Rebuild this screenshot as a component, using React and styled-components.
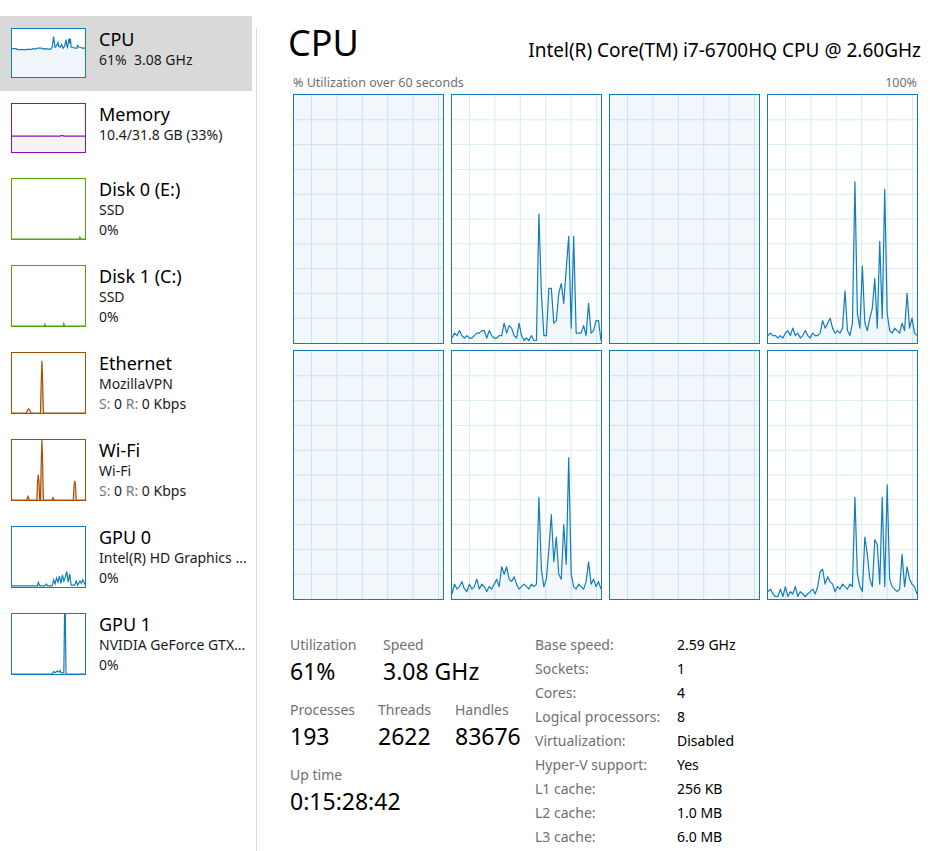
import React from "react";
import styled, { createGlobalStyle } from "styled-components";

const GlobalStyle = createGlobalStyle`
  html, body {
    margin: 0;
    padding: 0;
    background: #ffffff;
  }
  body {
    font-family: "Noto Sans", "Open Sans", sans-serif;
    color: #000000;
  }
`;

const CPU_BLUE = "#117dbb";

// 61 samples, one every 2.5px across a 150px wide cell
const coreData = [
  null,
  [2, 4, 3, 5, 3, 2, 3, 2, 2, 3, 4, 4, 5, 5, 2, 5, 3, 2, 2, 3, 3, 8, 4, 7, 6, 3, 2, 8, 3, 1, 2, 1, 3, 1, 1, 52, 20, 3, 3, 22, 22, 8, 9, 20, 24, 16, 30, 43, 6, 43, 4, 4, 4, 7, 3, 16, 4, 5, 9, 9, 1],
  null,
  [3, 4, 3, 3, 2, 3, 2, 4, 5, 3, 6, 3, 4, 2, 3, 5, 3, 2, 4, 3, 3, 4, 9, 6, 8, 10, 6, 4, 5, 4, 6, 21, 5, 3, 8, 65, 12, 6, 31, 8, 5, 10, 14, 26, 6, 41, 10, 62, 12, 5, 4, 6, 5, 4, 8, 5, 20, 6, 10, 4, 3],
  null,
  [2, 6, 4, 5, 7, 4, 3, 6, 4, 5, 8, 4, 6, 5, 3, 5, 4, 6, 8, 5, 13, 10, 13, 8, 7, 9, 6, 4, 5, 6, 5, 4, 6, 5, 6, 41, 12, 5, 8, 20, 34, 15, 25, 10, 8, 30, 14, 57, 10, 5, 4, 6, 5, 4, 7, 15, 6, 8, 5, 7, 4],
  null,
  [3, 4, 2, 1, 1, 4, 1, 5, 1, 3, 2, 5, 1, 3, 2, 1, 2, 3, 4, 2, 5, 11, 12, 6, 9, 7, 6, 3, 5, 4, 6, 5, 4, 6, 5, 41, 10, 5, 3, 25, 18, 8, 5, 24, 22, 6, 41, 5, 46, 8, 5, 4, 3, 4, 18, 5, 13, 8, 6, 5, 2],
];

const devices = [
  {
    name: "CPU",
    lines: [["61%  3.08 GHz"]],
    color: CPU_BLUE,
    fill: "#f1f6fa",
    height: 50,
    selected: true,
    points: [[0, 59], [6, 59], [7, 57], [20, 57], [22, 58], [26, 57], [28, 59], [32, 58], [35, 60], [40, 60], [43, 58], [46, 59], [50, 58], [53, 58], [55, 62], [57, 84], [59, 62], [61, 65], [63, 72], [64, 64], [66, 62], [68, 68], [70, 60], [72, 64], [74, 78], [75, 66], [76, 62], [78, 80], [79, 70], [80, 80], [81, 62], [84, 62], [86, 60], [89, 60], [90, 66], [92, 62], [94, 62], [96, 60], [100, 60]],
  },
  {
    name: "Memory",
    lines: [["10.4/31.8 GB (33%)"]],
    color: "#8b12ae",
    fill: "#f4f2f4",
    height: 50,
    points: [[0, 33], [66, 33], [67, 34], [70, 34], [71, 33], [100, 33]],
  },
  {
    name: "Disk 0 (E:)",
    lines: [["SSD"], ["0%"]],
    color: "#4da60c",
    fill: "none",
    height: 62,
    points: [[0, 0], [92, 0], [93, 3], [94, 0], [100, 0]],
  },
  {
    name: "Disk 1 (C:)",
    lines: [["SSD"], ["0%"]],
    color: "#4da60c",
    fill: "none",
    height: 62,
    points: [[0, 0], [44, 0], [45, 3], [46, 0], [70, 0], [71, 4], [72, 0], [100, 0]],
  },
  {
    name: "Ethernet",
    lines: [["MozillaVPN"], ["S: ", "0", " R: ", "0 Kbps"]],
    color: "#a74f01",
    fill: "rgba(167, 79, 1, 0.22)",
    height: 62,
    points: [[0, 0], [20, 0], [21, 5], [23, 7], [25, 3], [26, 0], [39, 0], [40, 50], [41, 87], [42, 50], [43, 0], [100, 0]],
  },
  {
    name: "Wi-Fi",
    lines: [["Wi-Fi"], ["S: ", "0", " R: ", "0 Kbps"]],
    color: "#a74f01",
    fill: "rgba(167, 79, 1, 0.22)",
    height: 62,
    points: [[0, 0], [20, 0], [22, 6], [24, 0], [34, 0], [35, 30], [36, 42], [37, 30], [38, 0], [39, 0], [40, 60], [41, 100], [42, 60], [43, 0], [55, 0], [56, 4], [58, 0], [84, 0], [85, 25], [86, 32], [87, 25], [88, 0], [100, 0]],
  },
  {
    name: "GPU 0",
    lines: [["Intel(R) HD Graphics ..."], ["0%"]],
    color: CPU_BLUE,
    fill: "none",
    height: 62,
    points: [[0, 2], [33, 2], [35, 2], [36, 8], [38, 2], [45, 2], [47, 5], [49, 2], [55, 2], [57, 12], [59, 5], [61, 15], [63, 8], [65, 18], [67, 6], [69, 20], [71, 10], [73, 16], [75, 26], [77, 8], [79, 22], [81, 3], [86, 3], [88, 10], [90, 3], [93, 10], [95, 6], [97, 12], [100, 4]],
  },
  {
    name: "GPU 1",
    lines: [["NVIDIA GeForce GTX..."], ["0%"]],
    color: CPU_BLUE,
    fill: "none",
    height: 62,
    points: [[0, 0], [55, 0], [57, 4], [59, 2], [62, 5], [64, 3], [66, 6], [67, 2], [71, 2], [72, 100], [73, 100], [74, 0], [100, 0]],
  },
];

const specs = [
  ["Base speed:", "2.59 GHz"],
  ["Sockets:", "1"],
  ["Cores:", "4"],
  ["Logical processors:", "8"],
  ["Virtualization:", "Disabled"],
  ["Hyper-V support:", "Yes"],
  ["L1 cache:", "256 KB"],
  ["L2 cache:", "1.0 MB"],
  ["L3 cache:", "6.0 MB"],
];

const Page = styled.div`
  display: flex;
  width: 930px;
  min-height: 851px;
`;

const Sidebar = styled.nav`
  width: 252px;
  padding-top: 16px;
  flex-shrink: 0;
`;

const Divider = styled.div`
  width: 1px;
  margin: 28px 0 0 4px;
  background: #d9d9d9;
  flex-shrink: 0;
`;

const Item = styled.div`
  display: flex;
  gap: 13px;
  padding: 12px 0 13px 11px;
  background: ${(p) => (p.$selected ? "#d9d9d9" : "transparent")};
`;

const Thumb = styled.div`
  width: 75px;
  height: ${(p) => p.$h}px;
  box-sizing: border-box;
  border: 1px solid ${(p) => p.$color};
  background: #ffffff;
  flex-shrink: 0;

  svg {
    display: block;
    width: 100%;
    height: 100%;
  }
`;

const ItemText = styled.div`
  display: flex;
  flex-direction: column;
  min-width: 0;
`;

const ItemName = styled.div`
  font-size: 18px;
  line-height: 22px;
  color: #000000;
  white-space: nowrap;
`;

const ItemLine = styled.div`
  font-size: 14px;
  line-height: 20px;
  color: #1a1a1a;
  white-space: pre;
`;

const Muted = styled.span`
  color: #767676;
`;

const Main = styled.main`
  flex: 1;
  display: flex;
  flex-direction: column;
  padding-top: 20px;
`;

const Header = styled.header`
  display: flex;
  justify-content: space-between;
  align-items: flex-end;
  padding: 0 9px 0 31px;
`;

const Title = styled.h1`
  margin: 0;
  font-size: 36px;
  font-weight: 400;
  line-height: 46px;
`;

const Model = styled.div`
  font-size: 19px;
  line-height: 28px;
  padding-bottom: 2px;
`;

const GraphCaption = styled.div`
  display: flex;
  justify-content: space-between;
  padding: 9px 13px 0 36px;
  font-size: 12.5px;
  line-height: 16px;
  color: #707070;
`;

const GraphGrid = styled.div`
  display: grid;
  grid-template-columns: repeat(4, 151px);
  grid-auto-rows: 250px;
  gap: 6px 7px;
  margin: 3px 0 0 36px;
`;

const Cell = styled.div`
  border: 1px solid ${CPU_BLUE};
  box-sizing: border-box;
  background: #ffffff;

  svg {
    display: block;
    width: 100%;
    height: 100%;
  }
`;

const Stats = styled.section`
  display: flex;
  margin-top: 32px;
  padding-left: 33px;
`;

const StatBlock = styled.div`
  width: 245px;
  padding-top: 3px;
`;

const StatRow = styled.div`
  display: flex;
  margin-bottom: 13px;
`;

const Stat = styled.div`
  width: ${(p) => p.$w}px;
  flex-shrink: 0;
`;

const StatLabel = styled.div`
  font-size: 14px;
  line-height: 20px;
  color: #707070;
`;

const StatValue = styled.div`
  font-size: 23px;
  line-height: 32px;
  color: #000000;
  white-space: nowrap;
`;

const SpecTable = styled.dl`
  display: grid;
  grid-template-columns: 142px auto;
  grid-auto-rows: 24px;
  align-items: center;
  margin: 0;
  font-size: 14px;
`;

const SpecLabel = styled.dt`
  color: #707070;
`;

const SpecValue = styled.dd`
  margin: 0;
  color: #000000;
`;

const toLine = (pts, w, h) =>
  pts.map(([x, v]) => `${((x / 100) * w).toFixed(2)},${(h - (v / 100) * h).toFixed(2)}`).join(" ");

const MiniChart = ({ color, fill, points }) => {
  const line = toLine(points, 100, 100);
  return (
    <svg viewBox="0 0 100 100" preserveAspectRatio="none">
      {fill !== "none" && <polygon points={`0,100 ${line} 100,100`} fill={fill} />}
      <polyline points={line} fill="none" stroke={color} strokeWidth="1.2" vectorEffect="non-scaling-stroke" />
    </svg>
  );
};

const CoreChart = ({ data }) => {
  const W = 149;
  const H = 248;
  const rows = Array.from({ length: 9 }, (_, i) => ((i + 1) * H) / 10);
  const cols = Array.from({ length: 6 }, (_, i) => 17.5 + i * 25.4);
  const line = data ? data.map((v, i) => `${((i * W) / 60).toFixed(2)},${(H - (v / 100) * H).toFixed(2)}`).join(" ") : "";
  return (
    <svg viewBox={`0 0 ${W} ${H}`} preserveAspectRatio="none">
      {rows.map((y) => (
        <line key={`r${y}`} x1="0" x2={W} y1={y} y2={y} stroke="#d9eaf4" strokeWidth="1" vectorEffect="non-scaling-stroke" />
      ))}
      {cols.map((x) => (
        <line key={`c${x}`} x1={x} x2={x} y1="0" y2={H} stroke="#d9eaf4" strokeWidth="1" vectorEffect="non-scaling-stroke" />
      ))}
      {data ? (
        <>
          <polygon points={`0,${H} ${line} ${W},${H}`} fill="rgba(17, 125, 187, 0.06)" />
          <polyline points={line} fill="none" stroke={CPU_BLUE} strokeWidth="1.2" strokeLinejoin="round" vectorEffect="non-scaling-stroke" />
        </>
      ) : (
        <rect x="0" y="0" width={W} height={H} fill="rgba(17, 125, 187, 0.06)" />
      )}
    </svg>
  );
};

const renderLine = (parts) =>
  parts.length > 1
    ? parts.map((p, i) => (i % 2 === 0 ? <Muted key={i}>{p}</Muted> : <span key={i}>{p}</span>))
    : parts[0];

export default function App() {
  return (
    <>
      <GlobalStyle />
      <Page>
        <Sidebar>
          {devices.map((d) => (
            <Item key={d.name} $selected={d.selected}>
              <Thumb $color={d.color} $h={d.height}>
                <MiniChart color={d.color} fill={d.fill} points={d.points} />
              </Thumb>
              <ItemText>
                <ItemName>{d.name}</ItemName>
                {d.lines.map((parts, i) => (
                  <ItemLine key={i}>{renderLine(parts)}</ItemLine>
                ))}
              </ItemText>
            </Item>
          ))}
        </Sidebar>
        <Divider />
        <Main>
          <Header>
            <Title>CPU</Title>
            <Model>Intel(R) Core(TM) i7-6700HQ CPU @ 2.60GHz</Model>
          </Header>
          <GraphCaption>
            <span>% Utilization over 60 seconds</span>
            <span>100%</span>
          </GraphCaption>
          <GraphGrid>
            {coreData.map((data, i) => (
              <Cell key={i}>
                <CoreChart data={data} />
              </Cell>
            ))}
          </GraphGrid>
          <Stats>
            <StatBlock>
              <StatRow>
                <Stat $w={93}>
                  <StatLabel>Utilization</StatLabel>
                  <StatValue>61%</StatValue>
                </Stat>
                <Stat $w={100}>
                  <StatLabel>Speed</StatLabel>
                  <StatValue>3.08 GHz</StatValue>
                </Stat>
              </StatRow>
              <StatRow>
                <Stat $w={88}>
                  <StatLabel>Processes</StatLabel>
                  <StatValue>193</StatValue>
                </Stat>
                <Stat $w={77}>
                  <StatLabel>Threads</StatLabel>
                  <StatValue>2622</StatValue>
                </Stat>
                <Stat $w={80}>
                  <StatLabel>Handles</StatLabel>
                  <StatValue>83676</StatValue>
                </Stat>
              </StatRow>
              <StatRow>
                <Stat $w={150}>
                  <StatLabel>Up time</StatLabel>
                  <StatValue>0:15:28:42</StatValue>
                </Stat>
              </StatRow>
            </StatBlock>
            <SpecTable>
              {specs.map(([k, v]) => (
                <React.Fragment key={k}>
                  <SpecLabel>{k}</SpecLabel>
                  <SpecValue>{v}</SpecValue>
                </React.Fragment>
              ))}
            </SpecTable>
          </Stats>
        </Main>
      </Page>
    </>
  );
}
